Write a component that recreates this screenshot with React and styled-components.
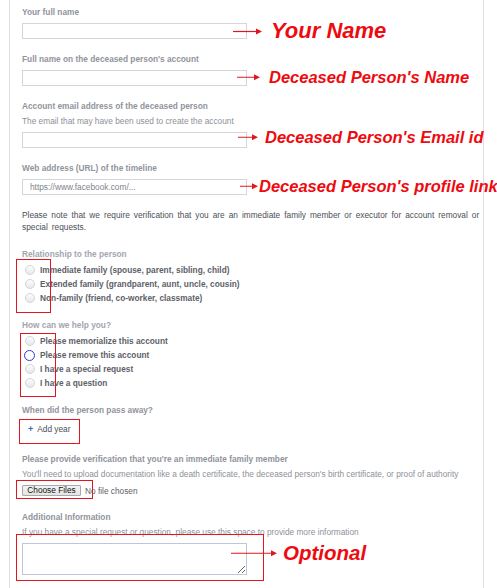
import styled, { createGlobalStyle } from "styled-components";

const GlobalStyle = createGlobalStyle`
  html, body {
    margin: 0;
    padding: 0;
    background: #fff;
  }
  body {
    font-family: "Liberation Sans", Arial, sans-serif;
    overflow: hidden;
  }
`;

const Form = styled.div`
  box-sizing: border-box;
  margin-left: 9px;
  width: 475px;
  min-height: 588px;
  padding: 6px 0 0 12px;
  border-left: 1px solid #dddfe2;
  border-right: 1px solid #dddfe2;
`;

const Section = styled.div`
  margin-bottom: ${({ $after = 14 }) => $after}px;
`;

const Label = styled.div`
  font-size: 8.3px;
  line-height: 12px;
  font-weight: bold;
  color: ${({ $muted }) => ($muted ? "#a2a6ad" : "#90949c")};
  margin-bottom: ${({ $gap = 5 }) => $gap}px;
  white-space: nowrap;
`;

const Hint = styled.div`
  font-size: 8.3px;
  line-height: 12px;
  color: #8d9198;
  margin-bottom: 5px;
  white-space: nowrap;
`;

const Note = styled.p`
  margin: 0 0 15px;
  max-width: 458px;
  font-size: 8.3px;
  line-height: 12px;
  word-spacing: 1.7px;
  color: #4b4f56;
`;

const InputRow = styled.div`
  position: relative;
`;

const TextInput = styled.input`
  display: block;
  box-sizing: border-box;
  width: 225px;
  height: 16px;
  margin: 0;
  padding: 0 0 0 7px;
  border: 1px solid #d3d6db;
  font-family: inherit;
  font-size: 8.3px;
  color: #4b4f56;
  outline: none;

  &::placeholder {
    color: #80848b;
  }
`;

const TextArea = styled.textarea`
  display: block;
  box-sizing: border-box;
  width: 225px;
  height: 32px;
  margin: 0;
  border: 1px solid #bdc7d8;
  font-family: inherit;
  font-size: 8.3px;
  resize: both;
  outline: none;
`;

const RadioList = styled.div`
  position: relative;
  display: flex;
  flex-direction: column;
`;

const RadioRow = styled.label`
  display: flex;
  align-items: center;
  height: 14px;
  font-size: 8.3px;
  font-weight: bold;
  color: #5d6168;
  white-space: nowrap;
`;

const Radio = styled.input.attrs({ type: "radio" })`
  appearance: none;
  box-sizing: border-box;
  flex: none;
  margin: 0 ${({ $focused }) => ($focused ? 5 : 5.5)}px 0
    ${({ $focused }) => ($focused ? 2 : 2.5)}px;
  width: ${({ $focused }) => ($focused ? 11 : 10)}px;
  height: ${({ $focused }) => ($focused ? 11 : 10)}px;
  border-radius: 50%;
  border: ${({ $focused }) =>
    $focused ? "1.3px solid #2f36d8" : "1px solid #d3d5d9"};
  background: ${({ $focused }) =>
    $focused ? "#fff" : "linear-gradient(#fdfdfd, #e6e8eb)"};
`;

const AddYear = styled.div`
  position: relative;
  display: flex;
  align-items: center;
  gap: 4px;
  margin: 7px 0 18px;
  padding-left: 6px;
  height: 12px;
  font-size: 8.3px;
  color: #4b4f56;
`;

const Plus = styled.span`
  font-weight: bold;
  font-size: 9px;
  color: #4267b2;
`;

const FileRow = styled.div`
  position: relative;
  display: flex;
  align-items: center;
  gap: 4px;
  height: 11px;
  font-size: 8.3px;
  color: #5d6168;
`;

const FileButton = styled.button`
  box-sizing: border-box;
  width: 59px;
  height: 11px;
  padding: 0;
  border: 1px solid #a9a9a9;
  border-radius: 1px;
  background: linear-gradient(#f4f4f4, #e4e4e4);
  font-family: inherit;
  font-size: 8.3px;
  line-height: 9px;
  color: #111;
`;

const RedBox = styled.div`
  position: absolute;
  left: ${({ $left }) => $left}px;
  top: ${({ $top }) => $top}px;
  width: ${({ $w }) => $w}px;
  height: ${({ $h }) => $h}px;
  border: 1.5px solid #e3161d;
  pointer-events: none;
`;

const Annotation = styled.div`
  position: absolute;
  left: ${({ $left }) => $left}px;
  top: ${({ $center }) => $center}px;
  transform: translateY(-50%);
  display: flex;
  align-items: center;
  gap: ${({ $gap }) => $gap}px;
  white-space: nowrap;
  pointer-events: none;
`;

const AnnotationText = styled.span`
  font-size: ${({ $size }) => $size}px;
  line-height: 1;
  font-weight: bold;
  font-style: italic;
  color: #ee0a0f;
`;

const Arrow = ({ width }) => (
  <svg width={width} height="7" viewBox={`0 0 ${width} 7`}>
    <line x1="0" y1="3.5" x2={width - 4} y2="3.5" stroke="#e3161d" strokeWidth="1.2" />
    <polygon points={`${width - 6},0.5 ${width},3.5 ${width - 6},6.5`} fill="#e3161d" />
  </svg>
);

const Callout = ({ left, center, gap, arrow, size, children }) => (
  <Annotation $left={left} $center={center} $gap={gap}>
    <Arrow width={arrow} />
    <AnnotationText $size={size}>{children}</AnnotationText>
  </Annotation>
);

const relationships = [
  "Immediate family (spouse, parent, sibling, child)",
  "Extended family (grandparent, aunt, uncle, cousin)",
  "Non-family (friend, co-worker, classmate)"
];

const requests = [
  "Please memorialize this account",
  "Please remove this account",
  "I have a special request",
  "I have a question"
];

export default function App() {
  return (
    <>
      <GlobalStyle />
      <Form>
        <Section>
          <Label>Your full name</Label>
          <InputRow>
            <TextInput />
            <Callout left={211} center={8} gap={9} arrow={29} size={22}>
              Your Name
            </Callout>
          </InputRow>
        </Section>

        <Section>
          <Label>Full name on the deceased person's account</Label>
          <InputRow>
            <TextInput />
            <Callout left={215} center={7} gap={9} arrow={23} size={16.5}>
              Deceased Person's Name
            </Callout>
          </InputRow>
        </Section>

        <Section>
          <Label $gap={3}>Account email address of the deceased person</Label>
          <Hint>The email that may have been used to create the account</Hint>
          <InputRow>
            <TextInput />
            <Callout left={216} center={5} gap={7} arrow={20} size={16.5}>
              Deceased Person's Email id
            </Callout>
          </InputRow>
        </Section>

        <Section>
          <Label>Web address (URL) of the timeline</Label>
          <InputRow>
            <TextInput placeholder="https://www.facebook.com/..." />
            <Callout left={218} center={7} gap={1} arrow={18} size={16.5}>
              Deceased Person's profile link
            </Callout>
          </InputRow>
        </Section>

        <Note>
          Please note that we require verification that you are an immediate
          family member or executor for account removal or special requests.
        </Note>

        <Section>
          <Label $muted $gap={3}>
            Relationship to the person
          </Label>
          <RadioList>
            {relationships.map(item => (
              <RadioRow key={item}>
                <Radio name="relationship" />
                {item}
              </RadioRow>
            ))}
            <RedBox $left={-6} $top={-4} $w={33} $h={52} />
          </RadioList>
        </Section>

        <Section>
          <Label $muted $gap={3}>
            How can we help you?
          </Label>
          <RadioList>
            {requests.map((item, i) => (
              <RadioRow key={item}>
                <Radio name="request" $focused={i === 1} />
                {item}
              </RadioRow>
            ))}
            <RedBox $left={-2} $top={-1} $w={34} $h={62} />
          </RadioList>
        </Section>

        <Label $gap={0}>When did the person pass away?</Label>
        <AddYear>
          <Plus>+</Plus>
          Add year
          <RedBox $left={-3} $top={-4} $w={59} $h={23} />
        </AddYear>

        <Section $after={15}>
          <Label $gap={3}>
            Please provide verification that you're an immediate family member
          </Label>
          <Hint>
            You'll need to upload documentation like a death certificate, the
            deceased person's birth certificate, or proof of authority
          </Hint>
          <FileRow>
            <FileButton type="button">Choose Files</FileButton>
            No file chosen
            <RedBox $left={-6} $top={-5} $w={75} $h={17} />
          </FileRow>
        </Section>

        <Section>
          <Label $gap={3}>Additional Information</Label>
          <Hint>
            If you have a special request or question, please use this space to
            provide more information
          </Hint>
          <InputRow>
            <TextArea />
            <RedBox $left={-6} $top={-9} $w={246} $h={45} />
            <Callout left={209} center={10} gap={6} arrow={46} size={20.5}>
              Optional
            </Callout>
          </InputRow>
        </Section>
      </Form>
    </>
  );
}
